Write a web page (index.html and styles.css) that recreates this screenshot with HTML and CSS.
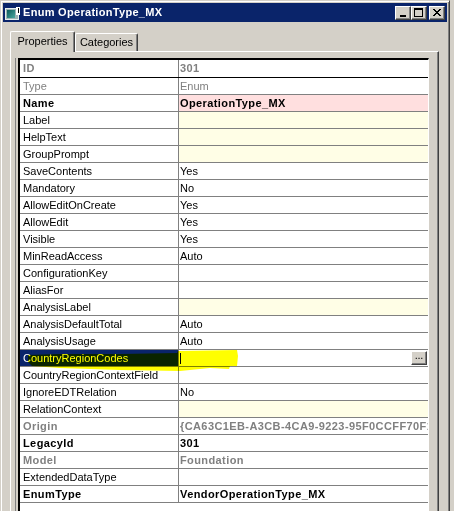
FILE: index.html
```html
<!DOCTYPE html>
<html>
<head>
<meta charset="utf-8">
<title>Enum OperationType_MX</title>
<link rel="stylesheet" href="styles.css">
</head>
<body>
<div class="window">
  <div class="titlebar">
    <svg class="appicon" width="16" height="13" viewBox="0 0 16 13">
      <defs>
        <linearGradient id="tg" x1="0" y1="0" x2="1" y2="1">
          <stop offset="0" stop-color="#0c5a5a"/>
          <stop offset="1" stop-color="#4aa8a0"/>
        </linearGradient>
      </defs>
      <rect x="0" y="1" width="14" height="12" fill="#e4ecec"/>
      <rect x="1" y="2" width="12" height="10" fill="#9cb4b4"/>
      <rect x="2" y="3" width="8" height="8" fill="url(#tg)"/>
      <rect x="11" y="0" width="4" height="8" fill="#ffffff"/>
      <rect x="13" y="1" width="1" height="5" fill="#000000"/>
    </svg>
    <span class="title">Enum OperationType_MX</span>
    <div class="caption-buttons">
      <span class="cbtn"><svg width="14" height="12" viewBox="0 0 14 12" shape-rendering="crispEdges"><rect x="4" y="8" width="6" height="2" fill="#000"/></svg></span>
      <span class="cbtn"><svg width="14" height="12" viewBox="0 0 14 12" shape-rendering="crispEdges"><path d="M2 1h9v9h-9z M3 3v6h7v-6z" fill="#000" fill-rule="evenodd"/></svg></span>
      <span class="cbtn close"><svg width="14" height="12" viewBox="0 0 14 12" shape-rendering="crispEdges"><g fill="#000"><rect x="3" y="2" width="2" height="1"/><rect x="9" y="2" width="2" height="1"/><rect x="4" y="3" width="2" height="1"/><rect x="8" y="3" width="2" height="1"/><rect x="5" y="4" width="4" height="1"/><rect x="6" y="5" width="2" height="1"/><rect x="5" y="6" width="4" height="1"/><rect x="4" y="7" width="2" height="1"/><rect x="8" y="7" width="2" height="1"/><rect x="3" y="8" width="2" height="1"/><rect x="9" y="8" width="2" height="1"/></g></svg></span>
    </div>
  </div>
  <div class="client">
    <div class="tabs">
      <div class="tab active">Properties</div>
      <div class="tab">Categories</div>
    </div>
    <div class="panel">
      <div class="frame">
        <div class="grid">
          <div class="row first"><div class="k g b">ID</div><div class="v g b">301</div></div>
          <div class="row"><div class="k g">Type</div><div class="v g">Enum</div></div>
          <div class="row"><div class="k b">Name</div><div class="v b pink">OperationType_MX</div></div>
          <div class="row"><div class="k">Label</div><div class="v cream"></div></div>
          <div class="row"><div class="k">HelpText</div><div class="v cream"></div></div>
          <div class="row"><div class="k">GroupPrompt</div><div class="v cream"></div></div>
          <div class="row"><div class="k">SaveContents</div><div class="v">Yes</div></div>
          <div class="row"><div class="k">Mandatory</div><div class="v">No</div></div>
          <div class="row"><div class="k">AllowEditOnCreate</div><div class="v">Yes</div></div>
          <div class="row"><div class="k">AllowEdit</div><div class="v">Yes</div></div>
          <div class="row"><div class="k">Visible</div><div class="v">Yes</div></div>
          <div class="row"><div class="k">MinReadAccess</div><div class="v">Auto</div></div>
          <div class="row"><div class="k">ConfigurationKey</div><div class="v"></div></div>
          <div class="row"><div class="k">AliasFor</div><div class="v"></div></div>
          <div class="row"><div class="k">AnalysisLabel</div><div class="v cream"></div></div>
          <div class="row"><div class="k">AnalysisDefaultTotal</div><div class="v">Auto</div></div>
          <div class="row"><div class="k">AnalysisUsage</div><div class="v">Auto</div></div>
          <div class="row sel"><div class="k">CountryRegionCodes</div><div class="v"><span class="caret"></span><span class="dots">...</span></div></div>
          <div class="row"><div class="k">CountryRegionContextField</div><div class="v"></div></div>
          <div class="row"><div class="k">IgnoreEDTRelation</div><div class="v">No</div></div>
          <div class="row"><div class="k">RelationContext</div><div class="v cream"></div></div>
          <div class="row"><div class="k g b">Origin</div><div class="v g b">{CA63C1EB-A3CB-4CA9-9223-95F0CCFF70F1}</div></div>
          <div class="row"><div class="k b">LegacyId</div><div class="v b">301</div></div>
          <div class="row"><div class="k g b">Model</div><div class="v g b">Foundation</div></div>
          <div class="row"><div class="k">ExtendedDataType</div><div class="v"></div></div>
          <div class="row"><div class="k b">EnumType</div><div class="v b">VendorOperationType_MX</div></div>
          <svg class="marker" width="408" height="330" viewBox="0 0 408 330">
            <polygon fill="#ffff00" points="8,295 40,294 100,294 157,293 158,291 217,290 218,296 217,306 210,306 209,309 190,308 160,311 100,310 40,308 12,306 8,302"/>
          </svg>
        </div>
      </div>
    </div>
  </div>
</div>
</body>
</html>
```

FILE: styles.css
```css
html, body {
  margin: 0;
  padding: 0;
  height: 511px;
  overflow: hidden;
  background: #d4d0c8;
}

body {
  font-family: "Liberation Sans", Arial, sans-serif;
  font-size: 11px;
  color: #000;
}

.window {
  width: 450px;
  height: 540px;
  box-sizing: border-box;
  border: 1px solid;
  border-color: #d4d0c8 #404040 #404040 #d4d0c8;
  box-shadow: inset 1px 1px #fff, inset -1px -1px #808080;
  padding: 2px;
  background: #d4d0c8;
}

.titlebar {
  height: 19px;
  display: flex;
  align-items: flex-start;
  background: #0a246a;
  color: #fff;
}

.appicon {
  margin: 4px 2px 0 2px;
  flex: none;
}

.title {
  flex: 1;
  font-weight: bold;
  letter-spacing: 0.3px;
  line-height: 19px;
  white-space: nowrap;
}

.caption-buttons {
  display: flex;
  margin: 3px 2px 0 0;
}

.cbtn {
  display: block;
  width: 16px;
  height: 14px;
  box-sizing: border-box;
  border: 1px solid;
  border-color: #fff #404040 #404040 #fff;
  box-shadow: inset -1px -1px #808080;
  background: #d4d0c8;
}

.cbtn svg {
  display: block;
}

.cbtn.close {
  margin-left: 2px;
}

.tabs {
  display: flex;
  align-items: flex-end;
  height: 20px;
  margin: 9px 0 0 7px;
  position: relative;
  z-index: 1;
}

.tab {
  box-sizing: border-box;
  width: 63px;
  height: 18px;
  line-height: 16px;
  text-align: center;
  border-top: 1px solid #fff;
  border-left: 1px solid #fff;
  border-right: 1px solid #404040;
  box-shadow: inset -1px 0 #808080;
  border-radius: 2px 2px 0 0;
  background: #d4d0c8;
}

.tab.active {
  width: 65px;
  height: 21px;
  line-height: 19px;
  margin-bottom: -1px;
}

.panel {
  margin: 0 8px 0 7px;
  height: 520px;
  border-top: 1px solid #fff;
  border-left: 1px solid #fff;
  border-right: 1px solid #404040;
  box-shadow: inset -1px 0 #808080;
  padding: 6px 0 0 4px;
}

.frame {
  width: max-content;
  border-left: 1px solid #808080;
  padding-left: 2px;
}

.grid {
  position: relative;
  width: 408px;
  height: 480px;
  border-top: 2px solid #000;
  border-left: 2px solid #000;
  border-right: 1px solid #fff;
  background: #fff;
}

.row {
  display: flex;
  height: 16px;
  line-height: 16px;
  border-bottom: 1px solid #808080;
}

.row.first {
  height: 17px;
  line-height: 17px;
  border-bottom-color: #000;
}

.k {
  width: 159px;
  flex: none;
  box-sizing: border-box;
  border-right: 1px solid #808080;
  padding-left: 3px;
  white-space: nowrap;
  overflow: hidden;
}

.v {
  flex: 1;
  padding-left: 1px;
  white-space: nowrap;
  overflow: hidden;
  position: relative;
}

.b {
  font-weight: bold;
  letter-spacing: 0.4px;
}

.g {
  color: #808080;
}

.pink {
  background: #ffdfdf;
}

.cream {
  background: #fffee6;
}

.sel .k {
  background: #0a246a;
  color: #fff;
}

.caret {
  position: absolute;
  left: 1px;
  top: 3px;
  width: 1px;
  height: 11px;
  background: #000;
}

.dots {
  position: absolute;
  right: 1px;
  top: 1px;
  width: 16px;
  height: 14px;
  box-sizing: border-box;
  border: 1px solid;
  border-color: #fff #404040 #404040 #fff;
  box-shadow: inset -1px -1px #808080;
  background: #d4d0c8;
  line-height: 7px;
  text-align: center;
  letter-spacing: -0.3px;
}

.marker {
  position: absolute;
  left: 0;
  top: 0;
  mix-blend-mode: multiply;
  pointer-events: none;
}
```
